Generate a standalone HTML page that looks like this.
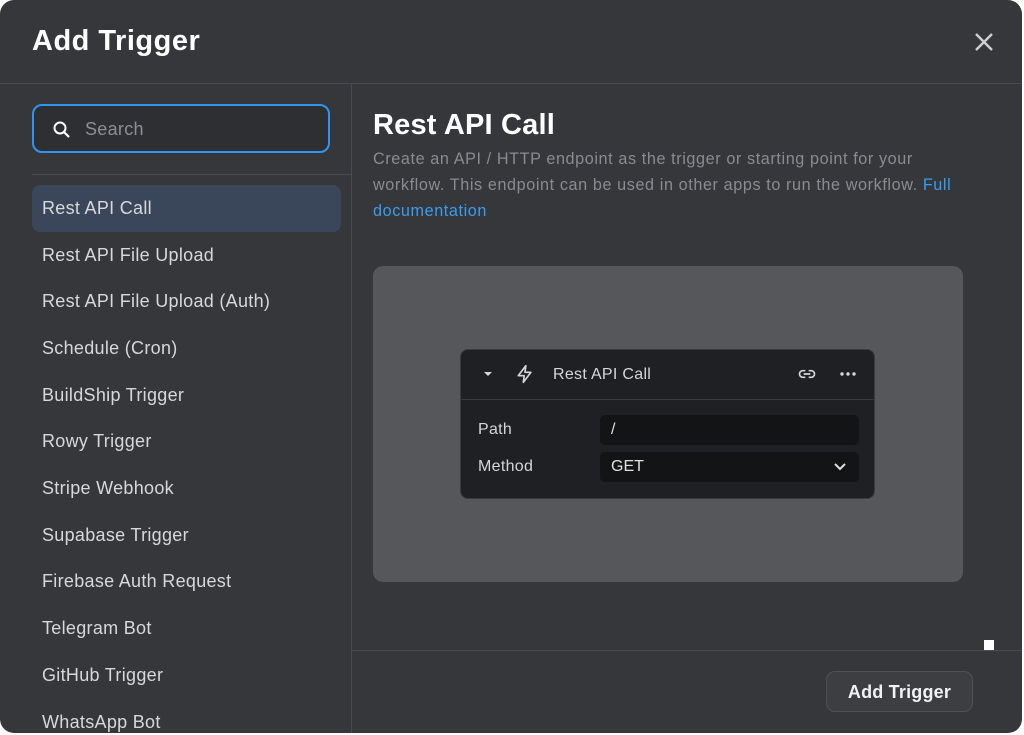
<!DOCTYPE html>
<html><head><style>
*{box-sizing:border-box;margin:0;padding:0}
body{width:1024px;height:735px;background:#fff;font-family:"Liberation Sans",sans-serif;overflow:hidden;position:relative}
.m{position:absolute;left:0;top:0;width:1022px;height:733px;background:#36373b;border-radius:14px;overflow:hidden}
.h{position:absolute;left:32px;top:25px;color:#fff;font-size:29px;font-weight:bold;letter-spacing:0.5px}
.x{position:absolute;left:972px;top:30px}
.hd{position:absolute;left:0;top:83px;width:1022px;height:1px;background:#4a4b50}
.vd{position:absolute;left:351px;top:84px;width:1px;height:650px;background:#4a4b50}
.s{position:absolute;left:32px;top:104px;width:298px;height:49px;border:2px solid #2f95ee;border-radius:10px;background:#2e2f33}
.s span{position:absolute;left:51px;top:13px;color:#8e8f94;font-size:18px;letter-spacing:0.3px}
.sd{position:absolute;left:32px;top:174px;width:319px;height:1px;background:#4a4b50}
.it{position:absolute;left:32px;width:309px;height:47px;line-height:47px;padding-left:10px;color:#d7d8db;font-size:18px;border-radius:8px;letter-spacing:0.3px}
.sel{background:#3a4659}
.t{position:absolute;left:373px;top:109px;color:#fff;font-size:29px;font-weight:bold;letter-spacing:0.2px}
.d{position:absolute;left:373px;top:146px;width:640px;color:#8a8b90;font-size:16.2px;line-height:26px;letter-spacing:0.6px;white-space:nowrap}
.d a{color:#3a9cf0;text-decoration:none}
.pv{position:absolute;left:373px;top:266px;width:590px;height:316px;background:#56575b;border-radius:10px}
.c{position:absolute;left:460px;top:349px;width:415px;height:150px;background:#1f2023;border:1px solid #3a3b3f;border-radius:8px}
.cl{position:absolute;left:0;top:49px;width:100%;height:1px;background:#3a3b3f}
.ct{position:absolute;left:92px;top:16px;color:#d5d6d9;font-size:16px;letter-spacing:0.3px}
.lb{position:absolute;left:17px;color:#d5d6d9;font-size:16px;letter-spacing:0.3px}
.f{position:absolute;left:139px;width:259px;height:30px;background:#131416;border-radius:5px;color:#e0e0e3;font-size:16px;padding:6px 11px}
.bd{position:absolute;left:352px;top:650px;width:670px;height:1px;background:#4a4b50}
.b{position:absolute;left:826px;top:671px;width:147px;height:41px;border:1px solid #505156;border-radius:9px;background:#3d3e42;color:#f2f2f4;font-size:18px;font-weight:bold;text-align:center;line-height:40px;letter-spacing:0.2px}
.sq{position:absolute;left:984px;top:640px;width:10px;height:10px;background:#fff}
</style></head><body><div class="m">
<div class="h">Add Trigger</div>
<svg class="x" width="24" height="24" viewBox="0 0 24 24"><path d="M4 4L20 20M20 4L4 20" stroke="#d0d0d3" stroke-width="2.4"/></svg>
<div class="hd"></div><div class="vd"></div>
<div class="s"><svg style="position:absolute;left:18px;top:14px" width="20" height="20" viewBox="0 0 20 20"><circle cx="8" cy="8" r="5.5" stroke="#fff" stroke-width="2" fill="none"/><path d="M12 12L17 17" stroke="#fff" stroke-width="2.2"/></svg><span>Search</span></div>
<div class="sd"></div>
<div class="it sel" style="top:185px">Rest API Call</div>
<div class="it" style="top:232px">Rest API File Upload</div>
<div class="it" style="top:278px">Rest API File Upload (Auth)</div>
<div class="it" style="top:325px">Schedule (Cron)</div>
<div class="it" style="top:372px">BuildShip Trigger</div>
<div class="it" style="top:418px">Rowy Trigger</div>
<div class="it" style="top:465px">Stripe Webhook</div>
<div class="it" style="top:512px">Supabase Trigger</div>
<div class="it" style="top:558px">Firebase Auth Request</div>
<div class="it" style="top:605px">Telegram Bot</div>
<div class="it" style="top:652px">GitHub Trigger</div>
<div class="it" style="top:699px">WhatsApp Bot</div>
<div class="t">Rest API Call</div>
<div class="d">Create an API / HTTP endpoint as the trigger or starting point for your<br>workflow. This endpoint can be used in other apps to run the workflow. <a>Full<br>documentation</a></div>
<div class="pv"></div>
<div class="c">
<svg style="position:absolute;left:21px;top:20px" width="12" height="8" viewBox="0 0 12 8"><path d="M2 2L6 6L10 2Z" fill="#d5d6d9"/></svg>
<svg style="position:absolute;left:54px;top:14px" width="20" height="20" viewBox="0 0 24 24"><path d="M13 2L4 14h7l-1 8 9-12h-7z" stroke="#d5d6d9" stroke-width="2" fill="none" stroke-linejoin="round"/></svg>
<div class="ct">Rest API Call</div>
<svg style="position:absolute;left:336px;top:14px" width="20" height="20" viewBox="0 0 24 24"><path d="M10 8H7a4 4 0 000 8h3M14 8h3a4 4 0 010 8h-3M8 12h8" stroke="#d5d6d9" stroke-width="2" fill="none"/></svg>
<svg style="position:absolute;left:377px;top:14px" width="20" height="20" viewBox="0 0 20 20"><circle cx="4" cy="10" r="1.7" fill="#d5d6d9"/><circle cx="10" cy="10" r="1.7" fill="#d5d6d9"/><circle cx="16" cy="10" r="1.7" fill="#d5d6d9"/></svg>
<div class="cl"></div>
<div class="lb" style="top:71px">Path</div>
<div class="f" style="top:65px">/</div>
<div class="lb" style="top:108px">Method</div>
<div class="f" style="top:102px">GET<svg style="position:absolute;right:12px;top:10px" width="14" height="10" viewBox="0 0 14 10"><path d="M2 2L7 7L12 2" stroke="#e0e0e3" stroke-width="2" fill="none"/></svg></div>
</div>
<div class="bd"></div>
<div class="b">Add Trigger</div>
</div><div class="sq"></div>
</body></html>
